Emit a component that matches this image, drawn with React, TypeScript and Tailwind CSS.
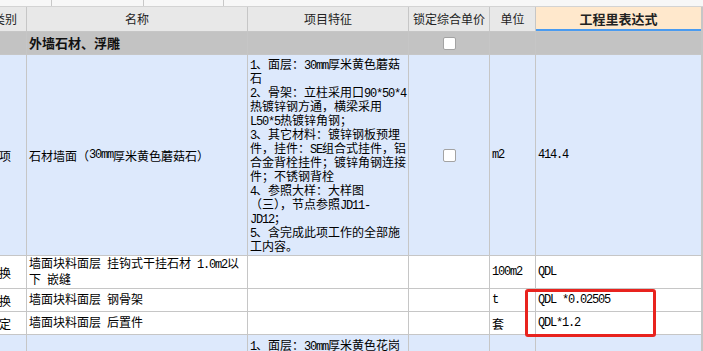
import React from 'react';

const cjk = '"Noto Sans CJK SC", "Noto Sans", sans-serif';

// ascii runs get a narrow mono face so they sit at half the width of a Chinese char, like the original grid font
function Mix({ text }: { text: string }) {
  const parts = text.split(/([\x20-\x7E]+)/).filter(Boolean);
  return (
    <>
      {parts.map((p, i) =>
        /^[\x20-\x7E]+$/.test(p) ? (
          <span key={i} className="font-['Liberation_Mono'] text-[12px] tracking-[-1.2px] whitespace-pre">
            {p}
          </span>
        ) : (
          <span key={i}>{p}</span>
        )
      )}
    </>
  );
}

function Checkbox() {
  return <div className="w-[13px] h-[13px] bg-white border border-[#a3a3a3] rounded-[2px]" />;
}

const features = [
  '1、面层：30mm厚米黄色蘑菇',
  '石',
  '2、骨架：立柱采用口90*50*4',
  '热镀锌钢方通，横梁采用',
  'L50*5热镀锌角钢；',
  '3、其它材料：镀锌钢板预埋',
  '件，挂件：SE组合式挂件，铝',
  '合金背栓挂件；镀锌角钢连接',
  '件；不锈钢背栓',
  '4、参照大样：大样图',
  '（三），节点参照JD11-',
  'JD12；',
  '5、含完成此项工作的全部施',
  '工内容。',
];

const subRows = [
  { kind: '换', name: ['墙面块料面层 挂钩式干挂石材 1.0m2以', '下 嵌缝'], unit: '100m2', expr: 'QDL', h: 'h-[32px]' },
  { kind: '换', name: ['墙面块料面层 钢骨架'], unit: 't', expr: 'QDL *0.02505', h: 'h-[22px]' },
  { kind: '定', name: ['墙面块料面层 后置件'], unit: '套', expr: 'QDL*1.2', h: 'h-[22px]' },
];

export default function App() {
  const cell = 'flex items-center text-[12px] text-black leading-[13px]';

  return (
    <div className="relative w-[703px] h-[351px] overflow-hidden bg-white" style={{ fontFamily: cjk }}>
      {/* strip of the panel above */}
      <div className="flex h-[7px] bg-[#f7f7f7] border-b border-[#d3d3d3]">
        <div className="w-[51px]" />
        <div className="w-[92px] border-l border-[#c8c8c8]" />
        <div className="w-[80px] border-l border-[#c8c8c8]" />
        <div className="flex-1 border-l border-[#c8c8c8]" />
      </div>

      <div className="-ml-[16px] w-[719px] grid grid-cols-[42px_220px_160px_80px_45px_165px] gap-px bg-[#c6c6c6] pr-px">
        {/* header */}
        <div className="h-[24px] bg-[#e8e8e8] flex items-center justify-center text-[12px] text-[#222]">类别</div>
        <div className="h-[24px] bg-[#e8e8e8] flex items-center justify-center text-[12px] text-[#222]">名称</div>
        <div className="h-[24px] bg-[#e8e8e8] flex items-center justify-center text-[12px] text-[#222]">项目特征</div>
        <div className="h-[24px] bg-[#e8e8e8] flex items-center justify-center text-[12px] text-[#222]">锁定综合单价</div>
        <div className="h-[24px] bg-[#e8e8e8] flex items-center justify-center text-[12px] text-[#222]">单位</div>
        <div className="h-[24px] bg-[#ffe8cc] border-b-2 border-[#4a9bf0] flex items-center justify-center text-[13px] font-bold text-[#222] pt-[1px]">
          工程里表达式
        </div>

        {/* group row */}
        <div className="h-[22px] bg-[#c3c3c3]" />
        <div className="h-[22px] bg-[#c3c3c3] flex items-center pl-[2px] text-[13px] font-bold text-[#111]">外墙石材、浮雕</div>
        <div className="h-[22px] bg-[#c3c3c3]" />
        <div className="h-[22px] bg-[#c3c3c3] flex items-center justify-center">
          <Checkbox />
        </div>
        <div className="h-[22px] bg-[#c3c3c3]" />
        <div className="h-[22px] bg-[#c3c3c3]" />

        {/* list item */}
        <div className={`${cell} h-[200px] bg-[#dde9fc] pl-[15px]`}>项</div>
        <div className={`${cell} h-[200px] bg-[#dde9fc] pl-[2px] whitespace-nowrap`}>
          <Mix text="石材墙面（30mm厚米黄色蘑菇石）" />
        </div>
        <div className="h-[200px] bg-[#dde9fc] flex flex-col justify-center pl-[2px] text-[12px] leading-[14px] text-black overflow-hidden">
          {features.map((line, i) => (
            <div key={i} className="whitespace-nowrap h-[14px]">
              <Mix text={line} />
            </div>
          ))}
        </div>
        <div className="h-[200px] bg-[#dde9fc] flex items-center justify-center">
          <Checkbox />
        </div>
        <div className={`${cell} h-[200px] bg-[#dde9fc] pl-[2px]`}>
          <Mix text="m2" />
        </div>
        <div className={`${cell} h-[200px] bg-[#dde9fc] pl-[2px]`}>
          <Mix text="414.4" />
        </div>

        {/* quota rows */}
        {subRows.map((r, i) => (
          <React.Fragment key={i}>
            <div className={`${cell} ${r.h} bg-white pl-[15px]`}>{r.kind}</div>
            <div className={`${r.h} bg-white flex flex-col justify-center pl-[2px] text-[12px] leading-[13px] text-black`}>
              {r.name.map((n, j) => (
                <div key={j} className="whitespace-nowrap">
                  <Mix text={n} />
                </div>
              ))}
            </div>
            <div className={`${r.h} bg-white`} />
            <div className={`${r.h} bg-white`} />
            <div className={`${cell} ${r.h} bg-white pl-[2px]`}>
              <Mix text={r.unit} />
            </div>
            <div className={`${cell} ${r.h} bg-white pl-[2px]`}>
              <Mix text={r.expr} />
            </div>
          </React.Fragment>
        ))}

        {/* next list item, cut off */}
        <div className="h-[40px] bg-[#dde9fc]" />
        <div className="h-[40px] bg-[#dde9fc]" />
        <div className="h-[40px] bg-[#dde9fc] pl-[2px] pt-[2px] text-[12px] leading-[15px] text-black whitespace-nowrap">
          <Mix text="1、面层：30mm厚米黄色花岗" />
        </div>
        <div className="h-[40px] bg-[#dde9fc]" />
        <div className="h-[40px] bg-[#dde9fc]" />
        <div className="h-[40px] bg-[#dde9fc]" />
      </div>

      {/* annotation box */}
      <div className="absolute left-[525px] top-[289px] w-[131px] h-[48px] border-[3px] border-[#e8231e] rounded-[3px]" />
    </div>
  );
}
